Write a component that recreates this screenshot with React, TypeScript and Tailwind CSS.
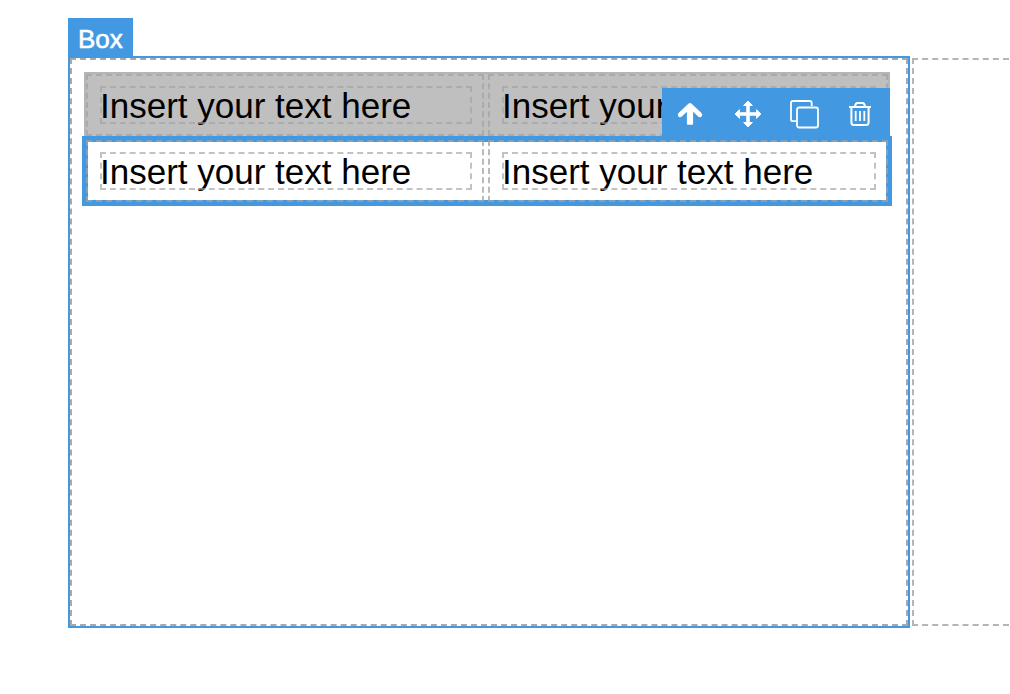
import type { ReactNode } from 'react';

const PLACEHOLDER = 'Insert your text here';

function ArrowUpIcon() {
  return (
    <svg viewBox="-14 -14 28 28" className="size-7" fill="none" stroke="currentColor" strokeLinecap="round" strokeLinejoin="round">
      <path d="M-9.8 .8 0-8.4 9.8 .8" strokeWidth="4.8" />
      <path d="M0-7V9" strokeWidth="6.2" strokeLinecap="butt" />
      <path d="M-2.1 9.7H2.1" strokeWidth="2" />
    </svg>
  );
}

function MoveIcon() {
  return (
    <svg viewBox="-15 -14 28 28" className="size-7" fill="currentColor" stroke="currentColor" strokeLinejoin="round">
      <path d="M0-13.3 4.5-8.8H1.3V-1.3H8.8V-4.5L13.3 0 8.8 4.5V1.3H1.3V8.8H4.5L0 13.3-4.5 8.8H-1.3V1.3H-8.8V4.5L-13.3 0-8.8-4.5V-1.3H-1.3V-8.8H-4.5Z" className="[transform:scale(0.97)]" />
    </svg>
  );
}

function CopyIcon() {
  return (
    <svg viewBox="-17 -15 32 30" className="h-7.5 w-8" fill="none" stroke="currentColor" strokeWidth="1.8">
      <rect x="-7" y="-6.5" width="21" height="20" rx="2" />
      <path d="M-7.5 7.2H-11Q-13 7.2-13 5.2V-11Q-13-13-11-13H5.7Q7.7-13 7.7-11V-8" />
    </svg>
  );
}

function TrashIcon() {
  return (
    <svg viewBox="-14 -14 28 28" className="size-7" fill="none" stroke="currentColor" strokeWidth="2">
      <path d="M-11-7H11M-5-7.5Q-4.5-11-2.5-11H2.5Q4.5-11 5-7.5M-8.6-7V8.5Q-8.6 11-6 11H6Q8.6 11 8.6 8.5V-7" />
      <path d="M-4.3-3V7M0-3V7M4.3-3V7" strokeWidth="1.8" />
    </svg>
  );
}

function ToolButton({ label, children }: { label: string; children: ReactNode }) {
  return (
    <button type="button" aria-label={label} className="flex flex-1 items-center justify-center hover:bg-[#3182ce]">
      {children}
    </button>
  );
}

function Toolbar() {
  return (
    <div
      role="toolbar"
      aria-label="Row actions"
      className="absolute bottom-full -right-0.5 flex h-13 w-57 bg-[#4299e1] pr-0.5 text-white"
    >
      <ToolButton label="Select parent">
        <ArrowUpIcon />
      </ToolButton>
      <ToolButton label="Move">
        <MoveIcon />
      </ToolButton>
      <ToolButton label="Duplicate">
        <CopyIcon />
      </ToolButton>
      <ToolButton label="Delete">
        <TrashIcon />
      </ToolButton>
    </div>
  );
}

function Cell() {
  return (
    <div className="min-w-0 border-2 border-dashed border-[#a3a3a3]/75 py-2.5 pr-2.5 pl-3">
      <p className="h-[38px] text-[35px] leading-10 whitespace-nowrap text-black outline-2 -outline-offset-2 outline-dashed outline-[#a3a3a3]/65">
        {PLACEHOLDER}
      </p>
    </div>
  );
}

function Row({ selected = false }: { selected?: boolean }) {
  return (
    <div
      className={
        selected
          ? 'relative grid grid-cols-[199fr_200fr] gap-1 border-2 border-[#4299e1] bg-white ring-2 ring-[#4299e1] inset-ring-2 inset-ring-[#4299e1]'
          : 'grid grid-cols-[199fr_200fr] gap-1 border-2 border-[#b5b5b5] bg-[#bfbfbf]'
      }
    >
      <Cell />
      <Cell />
      {selected && <Toolbar />}
    </div>
  );
}

export default function App() {
  return (
    <main className="min-h-screen bg-white pt-[18px] pr-px pl-[68px] font-['Liberation_Sans',Arial,sans-serif]">
      <div className="w-fit bg-[#4299e1] px-2.5 pt-1 text-[26px] leading-[34px] text-white [-webkit-text-stroke:0.6px_white]">
        Box
      </div>

      <div className="flex">
        {/* Selected box */}
        <section className="min-h-[572px] min-w-0 flex-1 border-2 border-[#4299e1]">
          <div className="min-h-[568px] border-2 border-dashed border-[#a9a9a9] pt-3 pr-4 pl-3">
            <Row />
            <Row selected />
          </div>
        </section>

        {/* Empty neighbour column */}
        <section className="my-0.5 ml-0.5 w-[97px] shrink-0 border-2 border-r-0 border-dashed border-[#b5b5b5]" />
      </div>
    </main>
  );
}
